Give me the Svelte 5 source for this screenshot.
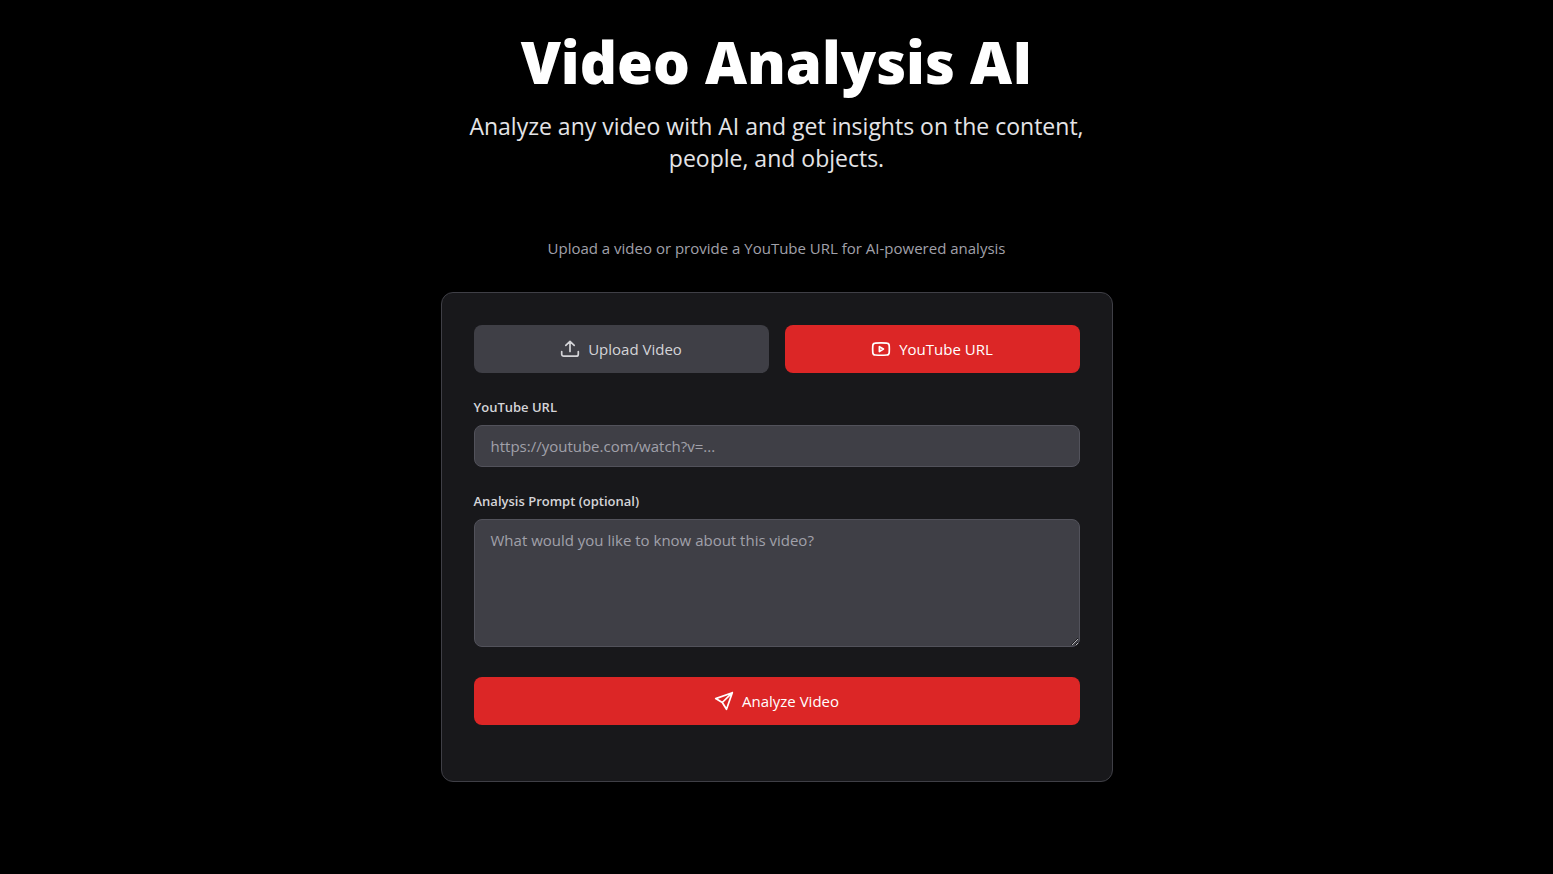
<script lang="ts">
  let source: 'upload' | 'youtube' = $state('youtube');
  let url = $state('');
  let prompt = $state('');
</script>

<main class="page">
  <header class="hero">
    <h1>Video Analysis AI</h1>
    <p class="tagline">Analyze any video with AI and get insights on the content, people, and objects.</p>
  </header>

  <p class="intro">Upload a video or provide a YouTube URL for AI-powered analysis</p>

  <form class="card" onsubmit={(e) => e.preventDefault()}>
    <div class="sources">
      <button type="button" class="btn" class:active={source === 'upload'} onclick={() => (source = 'upload')}>
        <svg class="icon" viewBox="0 0 20 20" aria-hidden="true">
          <path d="M1.7 12.5v2.7a2 2 0 0 0 2 2h12.6a2 2 0 0 0 2-2v-2.7M10 12.5V2.4M5.8 6.4 10 2.4l4.2 4" />
        </svg>
        Upload Video
      </button>
      <button type="button" class="btn" class:active={source === 'youtube'} onclick={() => (source = 'youtube')}>
        <svg class="icon" viewBox="0 0 20 20" aria-hidden="true">
          <path d="M4.2 4.2q5.8-.6 11.6 0a2.6 2.6 0 0 1 2.4 2.4q.3 3.5 0 7a2.6 2.6 0 0 1-2.4 2.4q-5.8.5-11.6 0a2.6 2.6 0 0 1-2.4-2.4q-.3-3.5 0-7a2.6 2.6 0 0 1 2.4-2.4z" />
          <path d="m8.4 7.7 4 2.4-4 2.4z" />
        </svg>
        YouTube URL
      </button>
    </div>

    <div class="field">
      <label for="video-url">YouTube URL</label>
      <input id="video-url" type="text" placeholder="https://youtube.com/watch?v=..." bind:value={url} />
    </div>

    <div class="field">
      <label for="prompt">Analysis Prompt (optional)</label>
      <textarea id="prompt" placeholder="What would you like to know about this video?" bind:value={prompt}></textarea>
    </div>

    <button type="submit" class="btn active submit">
      <svg class="icon" viewBox="0 0 20 20" aria-hidden="true">
        <path d="M18.3 1.7 1.7 7.6l6.6 3.9 4.2 6.8zM18.3 1.7l-10 9.8" />
      </svg>
      Analyze Video
    </button>
  </form>
</main>

<style>
  :global(body) {
    margin: 0;
    background: #000;
  }

  .page {
    box-sizing: border-box;
    max-width: 672px;
    margin: 0 auto;
    padding: 32px 0;
    font-family: 'Segoe UI', 'Open Sans', 'Noto Sans', sans-serif;
    font-size: 15px;
    line-height: 24px;
    color: #d4d4d8;
  }

  .hero {
    text-align: center;
  }

  h1 {
    margin: 0;
    font-size: 58px;
    font-weight: 800;
    line-height: 60px;
    color: #fff;
  }

  .tagline {
    margin: 18px 0 0;
    font-size: 23px;
    line-height: 32px;
    color: #e4e4e7;
  }

  .intro {
    margin: 62px 0 32px;
    text-align: center;
    color: #a1a1aa;
  }

  .card {
    padding: 32px 32px 56px;
    background: #18181b;
    border: 1px solid #3f3f46;
    border-radius: 12px;
  }

  .sources {
    display: grid;
    grid-template-columns: 1fr 1fr;
    gap: 16px;
    margin-bottom: 24px;
  }

  .btn {
    display: flex;
    align-items: center;
    justify-content: center;
    gap: 8px;
    width: 100%;
    padding: 12px 16px;
    border: 0;
    border-radius: 8px;
    background: #3f3f46;
    color: #d4d4d8;
    font: inherit;
    cursor: pointer;
  }

  .btn.active {
    background: #dc2626;
    color: #fff;
  }

  .icon {
    width: 20px;
    height: 20px;
    fill: none;
    stroke: currentColor;
    stroke-width: 1.7;
    stroke-linecap: round;
    stroke-linejoin: round;
  }

  .field {
    margin-bottom: 24px;
  }

  label {
    display: block;
    margin-bottom: 8px;
    font-size: 13px;
    font-weight: 600;
    line-height: 20px;
  }

  input,
  textarea {
    display: block;
    box-sizing: border-box;
    width: 100%;
    padding: 8px 16px;
    border: 1px solid #52525b;
    border-radius: 8px;
    background: #3f3f46;
    color: #fff;
    font: inherit;
  }

  input {
    height: 42px;
  }

  textarea {
    height: 128px;
    resize: vertical;
  }

  input::placeholder,
  textarea::placeholder {
    color: #a1a1aa;
  }

  .submit {
    margin-top: 30px;
  }
</style>
